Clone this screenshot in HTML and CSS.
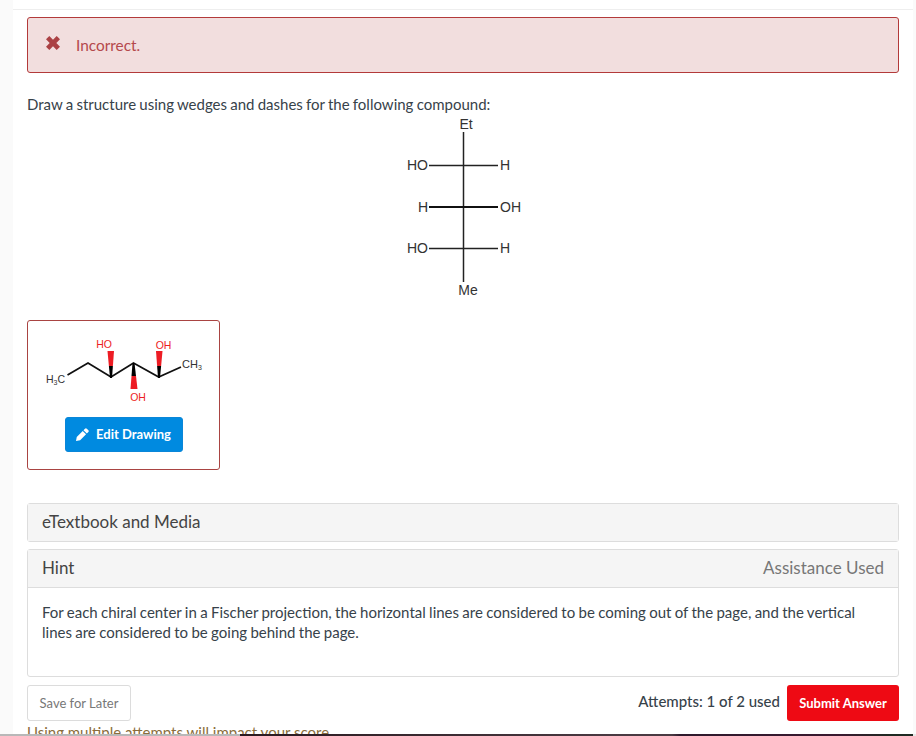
FILE: index.html
```html
<!DOCTYPE html>
<html lang="en">
<head>
<meta charset="utf-8">
<title>Question</title>
<link rel="stylesheet" href="styles.css">
</head>
<body>
<main class="sheet">
  <div class="alert">
    <svg class="alert-icon" viewBox="0 0 14 14" width="14" height="14" aria-hidden="true"><path d="M0 3.300 3.300 0 7 3.700 10.700 0 14 3.300 10.300 7 14 10.700 10.700 14 7 10.300 3.300 14 0 10.700 3.700 7z"/></svg>
    <span>Incorrect.</span>
  </div>
  <p class="prompt">Draw a structure using wedges and dashes for the following compound:</p>
  <svg class="fischer" viewBox="0 0 120 186" width="120" height="186" role="img" aria-label="Fischer projection">
    <g class="bonds">
      <path d="M60.500 18V168"/>
      <path d="M26 51.500H95"/>
      <path class="thick" d="M26 93H95"/>
      <path d="M26 134.500H95"/>
    </g>
    <g class="atoms">
      <text x="63" y="15" text-anchor="middle">Et</text>
      <text x="25" y="56" text-anchor="end">HO</text>
      <text x="97" y="56">H</text>
      <text x="25" y="98" text-anchor="end">H</text>
      <text x="97" y="98">OH</text>
      <text x="25" y="139" text-anchor="end">HO</text>
      <text x="97" y="139">H</text>
      <text x="65" y="181" text-anchor="middle">Me</text>
    </g>
  </svg>
  <div class="answer">
    <svg class="molecule" viewBox="0 0 191 80" width="191" height="80" role="img" aria-label="Drawn structure">
      <defs>
        <linearGradient id="up" x1="0" y1="0" x2="0" y2="1"><stop offset="0.55" stop-color="#ed1c24"/><stop offset="0.55" stop-color="#000"/></linearGradient>
        <linearGradient id="down" x1="0" y1="0" x2="0" y2="1"><stop offset="0.5" stop-color="#000"/><stop offset="0.5" stop-color="#ed1c24"/></linearGradient>
      </defs>
      <path class="chain" d="M39.500 50 60 38 83 52 105.500 38 130.700 52 153 42"/>
      <path fill="url(#up)" d="M79.500 26h6.500L84 53h-2z"/>
      <path fill="url(#down)" d="M104.500 38h2L109.500 64h-7z"/>
      <path fill="url(#up)" d="M128 26h6.500L132 53h-2z"/>
      <text class="lbl red" x="76" y="23" text-anchor="middle">HO</text>
      <text class="lbl red" x="135.500" y="24" text-anchor="middle">OH</text>
      <text class="lbl red" x="110" y="76" text-anchor="middle">OH</text>
      <text class="lbl" x="18" y="58">H<tspan class="sub" dy="2">3</tspan><tspan dy="-2">C</tspan></text>
      <text class="lbl wide" x="154" y="43">CH<tspan class="sub" dy="2">3</tspan></text>
    </svg>
    <button class="btn-edit" type="button">
      <svg viewBox="0 0 12 12" width="13" height="13" aria-hidden="true"><path d="M8.300.6a1.200 1.200 0 0 1 1.700 0l1.400 1.400a1.200 1.200 0 0 1 0 1.700L10 5.100 6.900 2zM6.200 2.700l3.100 3.100-5.500 5.500-3.800.7.700-3.800z"/></svg>
      Edit Drawing
    </button>
  </div>
  <section class="panel panel-media">
    <header class="panel-head">eTextbook and Media</header>
  </section>
  <section class="panel panel-hint">
    <header class="panel-head"><span>Hint</span><span class="used">Assistance Used</span></header>
    <div class="panel-body">For each chiral center in a Fischer projection, the horizontal lines are considered to be coming out of the page, and the vertical lines are considered to be going behind the page.</div>
  </section>
  <div class="actions">
    <button class="btn-save" type="button">Save for Later</button>
    <div class="submit-group">
      <span class="attempts">Attempts: 1 of 2 used</span>
      <button class="btn-submit" type="button">Submit Answer</button>
    </div>
  </div>
  <p class="warning">Using multiple attempts will impact your score.</p>
</main>
<div class="taskbar"></div>
</body>
</html>
```
FILE: styles.css
```css
* { box-sizing: border-box; }
html, body { margin: 0; height: 736px; overflow: hidden; }
body { background: #fafafa; font-family: Lato, "Open Sans", sans-serif; color: #37424a; }
.sheet { width: 900px; height: 736px; margin-left: 13px; padding: 0 14px; background: #fff; overflow: hidden; position: relative; }
.sheet::before { content: ""; display: block; height: 1px; margin: 9px -14px 7px; background: #eeeeee; }
.alert { height: 56px; display: flex; align-items: center; gap: 16px; padding: 0 0 0 18px; border: 1px solid #b33a3a; border-radius: 3px; background: #f2dede; color: #b5484c; font-size: 15.400px; }
.alert-icon { fill: #ab4144; position: relative; top: -2px; }
.prompt { margin: 21px 0 0; font-size: 15px; line-height: 20px; word-spacing: -0.6px; }
.fischer { display: block; margin: 0 auto; }
.bonds path { stroke: #222; stroke-width: 1.500; fill: none; }
.bonds .thick { stroke-width: 2; stroke: #111; }
.atoms text { font-family: "Liberation Sans", sans-serif; font-size: 14px; fill: #333; }
.answer { width: 193px; height: 150px; margin-top: 20px; border: 1px solid #a94442; border-radius: 3px; display: flex; flex-direction: column; align-items: center; }
.molecule { display: block; margin-top: 4px; flex: none; }
.chain { fill: none; stroke: #111; stroke-width: 1.800; }
.lbl { font-family: "Liberation Sans", sans-serif; font-size: 10.500px; fill: #333; }
.lbl.red { fill: #ed1c24; }
.lbl.wide { font-size: 11px; }
.sub { font-size: 7px; }
.btn-edit { width: 118px; height: 35px; margin-top: 12px; display: flex; align-items: center; justify-content: center; gap: 7px; padding: 0 0 2px; border: 1px solid #0a86d8; border-radius: 3px; background: #008ae0; color: #fff; font: 700 13px Lato, sans-serif; flex: none; }
.btn-edit svg { fill: #fff; position: relative; top: 1px; }
.panel { border: 1px solid #dddddd; border-radius: 3px; background: #fff; }
.panel-media { height: 39px; margin-top: 33px; }
.panel-head { display: flex; justify-content: space-between; align-items: center; height: 37px; padding: 0 14px 2px; background: #f5f5f5; font-size: 17px; color: #444; }
.panel-hint { height: 128px; margin-top: 7px; }
.panel-hint .panel-head { border-bottom: 1px solid #dddddd; height: 38px; }
.used { color: #777; }
.panel-body { padding: 14px 14px 0; font-size: 15px; line-height: 20px; word-spacing: -0.5px; color: #37424a; }
.actions { display: flex; justify-content: space-between; margin-top: 8px; }
.btn-save { width: 104px; height: 36px; padding: 0; border: 1px solid #dcdcdc; border-radius: 3px; background: #fff; color: #777; font: 13px Lato, sans-serif; }
.submit-group { display: flex; gap: 7px; }
.attempts { font-size: 15px; font-weight: 500; line-height: 33px; color: #37424a; }
.btn-submit { width: 112px; height: 36px; padding: 0; border: 0; border-radius: 3px; background: #ee0a14; color: #fff; font: 700 13px Lato, sans-serif; }
.warning { margin: 1px 0 0; font-size: 15px; line-height: 20px; color: #8a6d3b; }
.taskbar { position: fixed; left: 0; right: 0; bottom: 0; height: 2px; background: linear-gradient(90deg, #b8b8b8 0 240px, #2a1a20 240px, #4a3a42 620px, #4a3a42 672px, #2e1a2c 680px, #3a1a30 840px, #1f2a22 890px, #1f2a22 913px, #e8e8e8 913px); }
```
